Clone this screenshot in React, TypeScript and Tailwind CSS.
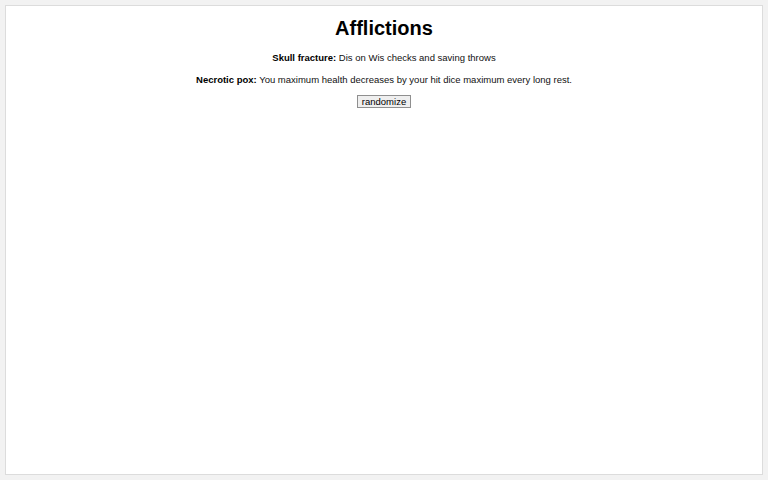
import React, { useState } from 'react'

type Affliction = { name: string; effect: string }

const afflictions: Affliction[] = [
  { name: 'Skull fracture', effect: 'Dis on Wis checks and saving throws' },
  { name: 'Necrotic pox', effect: 'You maximum health decreases by your hit dice maximum every long rest.' },
]

export default function App(): React.JSX.Element {
  const [list] = useState<Affliction[]>(afflictions)

  return (
    <div className="h-[480px] bg-[#f2f2f2] p-[5px] font-['Liberation_Sans',Arial,sans-serif] text-black">
      <div className="flex h-full flex-col items-center border border-[#dcdcdc] bg-white pt-[10px]">
        <h1 className="text-[20px] font-bold leading-[24px]">Afflictions</h1>
        <div className="mt-[12px] flex flex-col items-center gap-[11px] text-[9.5px] leading-[11px] text-[#111]">
          {list.map((a) => (
            <p key={a.name}>
              <b className="text-black">{a.name}:</b> {a.effect}
            </p>
          ))}
        </div>
        <button className="mt-[10px] h-[13px] border border-[#8f8f8f] bg-[#efefef] px-[4px] text-[9.5px] leading-[11px]">
          randomize
        </button>
      </div>
    </div>
  )
}
